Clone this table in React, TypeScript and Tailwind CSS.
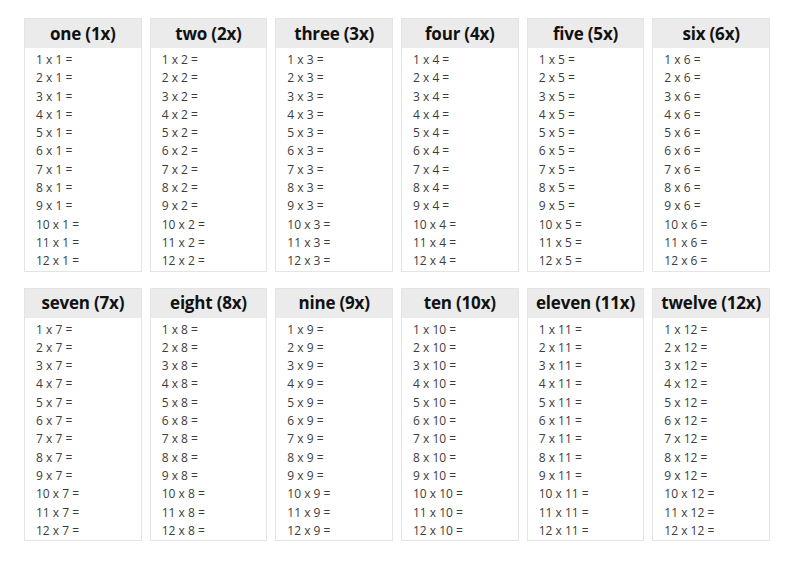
const names = ['one', 'two', 'three', 'four', 'five', 'six', 'seven', 'eight', 'nine', 'ten', 'eleven', 'twelve'];

function TableCard({ n }: { n: number }) {
  return (
    <div className="flex flex-col border border-[#e4e4e4] bg-white">
      <div className="flex h-[29px] items-center justify-center bg-[#ebebeb] text-[17px] font-bold tracking-[-0.2px] text-[#111]">
        {names[n - 1]} ({n}x)
      </div>
      <div className="px-[11px] pt-[3px] text-[12px] leading-[18.3px] text-[#3c3c3c]">
        {Array.from({ length: 12 }, (_, i) => (
          <div key={i}>{i + 1} x {n} =</div>
        ))}
      </div>
    </div>
  );
}

export default function App() {
  return (
    <div className="h-[561px] w-[794px] bg-white pl-[24px] pr-[24px] pt-[18px] font-['Open_Sans',sans-serif]">
      <div className="grid grid-cols-6 gap-x-[8px] gap-y-[16px]">
        {Array.from({ length: 12 }, (_, i) => (
          <TableCard key={i} n={i + 1} />
        ))}
      </div>
    </div>
  );
}
